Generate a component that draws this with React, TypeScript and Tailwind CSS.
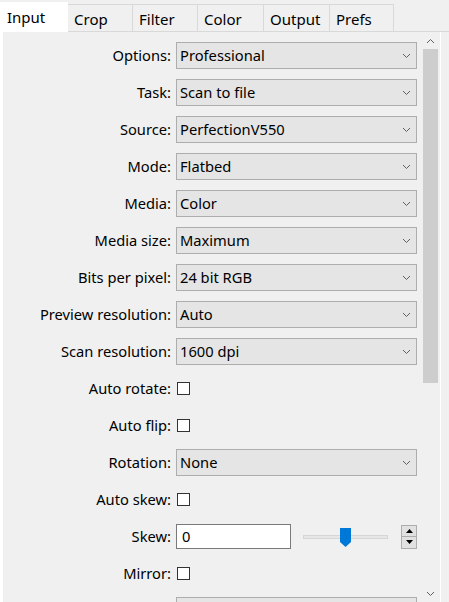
import React from "react";

const tabs = [
  { name: "Input", w: "w-[68px]" },
  { name: "Crop", w: "w-[65px]" },
  { name: "Filter", w: "w-[65px]" },
  { name: "Color", w: "w-[66px]" },
  { name: "Output", w: "w-[66px]" },
  { name: "Prefs", w: "w-[64px]" },
];

type Row =
  | { label: string; kind: "combo"; value: string }
  | { label: string; kind: "check" }
  | { label: string; kind: "skew" };

const rows: Row[] = [
  { label: "Options:", kind: "combo", value: "Professional" },
  { label: "Task:", kind: "combo", value: "Scan to file" },
  { label: "Source:", kind: "combo", value: "PerfectionV550" },
  { label: "Mode:", kind: "combo", value: "Flatbed" },
  { label: "Media:", kind: "combo", value: "Color" },
  { label: "Media size:", kind: "combo", value: "Maximum" },
  { label: "Bits per pixel:", kind: "combo", value: "24 bit RGB" },
  { label: "Preview resolution:", kind: "combo", value: "Auto" },
  { label: "Scan resolution:", kind: "combo", value: "1600 dpi" },
  { label: "Auto rotate:", kind: "check" },
  { label: "Auto flip:", kind: "check" },
  { label: "Rotation:", kind: "combo", value: "None" },
  { label: "Auto skew:", kind: "check" },
  { label: "Skew:", kind: "skew" },
  { label: "Mirror:", kind: "check" },
  { label: "", kind: "combo", value: "" },
];

function Chevron({ className = "" }: { className?: string }) {
  return (
    <svg width="9" height="6" viewBox="0 0 9 6" className={className}>
      <path d="M1 1 L4.5 4.5 L8 1" fill="none" stroke="currentColor" strokeWidth="1" />
    </svg>
  );
}

function Combo({ value }: { value: string }) {
  return (
    <div className="flex h-[27px] w-[241px] items-center justify-between border border-[#adadad] bg-[#e5e5e5] pl-[3px] pr-[5px]">
      <span>{value}</span>
      <Chevron className="text-[#606060]" />
    </div>
  );
}

function Check() {
  return <div className="ml-px h-[13px] w-[13px] border border-[#333] bg-white" />;
}

function Skew() {
  return (
    <div className="flex w-[241px] items-center">
      <div className="flex h-[25px] w-[116px] items-center border border-[#7a7a7a] bg-white pl-[5px]">0</div>
      <div className="relative ml-[12px] h-[18px] w-[85px]">
        <div className="absolute left-0 right-0 top-[7px] h-[4px] border border-[#d6d6d6] bg-[#e7e7e7]" />
        <svg width="11" height="19" viewBox="0 0 11 19" className="absolute left-[37px] top-0">
          <path d="M0 0 H11 V14 L5.5 19 L0 14 Z" fill="#0078d7" />
        </svg>
      </div>
      <div className="ml-[13px] flex h-[24px] w-[16px] flex-col border border-[#adadad] bg-[#e1e1e1]">
        <div className="flex flex-1 items-center justify-center border-b border-[#adadad]">
          <svg width="7" height="4" viewBox="0 0 7 4"><path d="M0 4 L3.5 0 L7 4 Z" fill="#000" /></svg>
        </div>
        <div className="flex flex-1 items-center justify-center">
          <svg width="7" height="4" viewBox="0 0 7 4"><path d="M0 0 L3.5 4 L7 0 Z" fill="#000" /></svg>
        </div>
      </div>
    </div>
  );
}

export default function App() {
  return (
    <div
      className="h-[602px] w-[449px] overflow-hidden bg-[#f0f0f0] text-[14.7px] leading-none text-black"
      style={{ fontFamily: '"Noto Sans", "Open Sans", sans-serif' }}
    >
      <div className="flex h-[31px] items-end">
        {tabs.map((t, i) =>
          i === 0 ? (
            <div
              key={t.name}
              className={`${t.w} relative z-10 -mb-px flex h-[30px] items-center bg-white pl-[7px] text-[15px]`}
            >
              {t.name}
            </div>
          ) : (
            <div
              key={t.name}
              className={`${t.w} flex h-[27px] items-center border-r border-t border-[#d9d9d9] pl-[6px] pt-[2px] text-[15px]`}
            >
              {t.name}
            </div>
          )
        )}
      </div>
      <div className="flex h-[571px] border-t border-[#d9d9d9] bg-white pl-[3px]">
        <div className="flex w-[437px] bg-[#f0f0f0]">
          <div className="flex w-[419px] flex-col gap-[10px] pt-[10px]">
            {rows.map((r, i) => (
              <div key={i} className="flex h-[27px] shrink-0 items-center">
                <div className="w-[169px] pr-[1px] text-right">{r.label}</div>
                <div className="ml-[4px] flex items-center">
                  {r.kind === "combo" && <Combo value={r.value} />}
                  {r.kind === "check" && <Check />}
                  {r.kind === "skew" && <Skew />}
                </div>
              </div>
            ))}
          </div>
          <div className="flex w-[17px] flex-col items-center">
            <div className="flex h-[17px] w-full items-center justify-center">
              <Chevron className="rotate-180 text-[#606060]" />
            </div>
            <div className="h-[334px] w-[15px] bg-[#cdcdcd]" />
            <div className="flex-1" />
            <div className="flex h-[17px] w-full items-center justify-center">
              <Chevron className="text-[#606060]" />
            </div>
          </div>
        </div>
        <div className="w-px bg-white" />
        <div className="flex-1 bg-[#f0f0f0]" />
      </div>
    </div>
  );
}
